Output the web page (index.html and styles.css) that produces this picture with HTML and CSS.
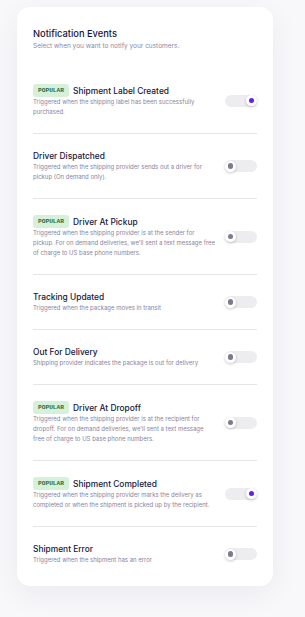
FILE: index.html
```html
<!DOCTYPE html>
<html lang="en">
<head>
  <meta charset="UTF-8">
  <meta name="viewport" content="width=device-width, initial-scale=1.0">
  <title>Notification Events</title>
  <link rel="stylesheet" href="styles.css">
</head>
<body>
  <div class="card">
    <div class="card-header">
      <h3>Notification Events</h3>
      <p>Select when you want to notify your customers.</p>
    </div>

    <div class="event">
      <div class="event-text">
        <div class="event-title"><span class="badge">POPULAR</span>Shipment Label Created</div>
        <p>Triggered when the shipping label has been successfully<br>purchased.</p>
      </div>
      <div class="toggle on"><span class="knob"></span></div>
    </div>

    <div class="event">
      <div class="event-text">
        <div class="event-title">Driver Dispatched</div>
        <p>Triggered when the shipping provider sends out a driver for<br>pickup (On demand only).</p>
      </div>
      <div class="toggle"><span class="knob"></span></div>
    </div>

    <div class="event">
      <div class="event-text">
        <div class="event-title"><span class="badge">POPULAR</span>Driver At Pickup</div>
        <p>Triggered when the shipping provider is at the sender for<br>pickup. For on demand deliveries, we'll sent a text message free<br>of charge to US base phone numbers.</p>
      </div>
      <div class="toggle"><span class="knob"></span></div>
    </div>

    <div class="event">
      <div class="event-text">
        <div class="event-title">Tracking Updated</div>
        <p>Triggered when the package moves in transit</p>
      </div>
      <div class="toggle"><span class="knob"></span></div>
    </div>

    <div class="event">
      <div class="event-text">
        <div class="event-title">Out For Delivery</div>
        <p>Shipping provider indicates the package is out for delivery</p>
      </div>
      <div class="toggle"><span class="knob"></span></div>
    </div>

    <div class="event">
      <div class="event-text">
        <div class="event-title"><span class="badge">POPULAR</span>Driver At Dropoff</div>
        <p>Triggered when the shipping provider is at the recipient for<br>dropoff. For on demand deliveries, we'll sent a text message<br>free of charge to US base phone numbers.</p>
      </div>
      <div class="toggle"><span class="knob"></span></div>
    </div>

    <div class="event">
      <div class="event-text">
        <div class="event-title"><span class="badge">POPULAR</span>Shipment Completed</div>
        <p>Triggered when the shipping provider marks the delivery as<br>completed or when the shipment is picked up by the recipient.</p>
      </div>
      <div class="toggle on"><span class="knob"></span></div>
    </div>

    <div class="event">
      <div class="event-text">
        <div class="event-title">Shipment Error</div>
        <p>Triggered when the shipment has an error</p>
      </div>
      <div class="toggle"><span class="knob"></span></div>
    </div>
  </div>
</body>
</html>
```

FILE: styles.css
```css
body {
  margin: 0;
  padding: 7px 0 40px;
  background-color: #f8f8fa;
  font-family: 'Inter', 'Noto Sans', sans-serif;
}

.card {
  width: 224px;
  margin-left: 17px;
  padding: 21px 16px 5px;
  background: #fff;
  border-radius: 13px;
  box-shadow: 0 8px 30px rgba(40, 40, 80, 0.06);
}

.card-header {
  margin-bottom: 16px;
}

.card-header h3 {
  margin: 0;
  font-size: 9.3px;
  line-height: 12px;
  font-weight: 500;
  color: #16163a;
}

.card-header p {
  margin: 1px 0 0;
  font-size: 6.5px;
  line-height: 11px;
  color: #8b89a2;
}

.event {
  display: flex;
  align-items: center;
  gap: 9px;
  padding: 16px 0;
  border-bottom: 1px solid #e6e6ea;
}

.event:last-child {
  border-bottom: none;
}

.event-text {
  flex: 1;
}

.event-title {
  display: flex;
  align-items: center;
  min-height: 12px;
  font-size: 8.4px;
  font-weight: 500;
  color: #16163a;
  white-space: nowrap;
}

.badge {
  display: inline-flex;
  align-items: center;
  height: 13px;
  padding: 0 5px;
  margin-right: 4px;
  border-radius: 3px;
  background: #d6f1da;
  color: #2f6a3d;
  font-family: 'Liberation Mono', monospace;
  font-size: 6.2px;
  font-weight: bold;
}

.event-text p {
  margin: 0;
  font-size: 6px;
  line-height: 10px;
  color: #88849e;
  white-space: nowrap;
}

.toggle {
  position: relative;
  flex-shrink: 0;
  width: 32px;
  height: 12px;
  border-radius: 6px;
  background: #ededef;
}

.knob {
  position: absolute;
  top: 0.5px;
  left: 0;
  width: 11px;
  height: 11px;
  border-radius: 50%;
  background: #fff;
  box-shadow: 0 1px 3px rgba(0, 0, 0, 0.22);
  display: flex;
  justify-content: center;
  align-items: center;
}

.knob::after {
  content: '';
  width: 5.5px;
  height: 5.5px;
  border-radius: 50%;
  background: #7c7a8c;
}

.toggle.on .knob {
  left: 21px;
}

.toggle.on .knob::after {
  background: #6b1fe6;
}
```
